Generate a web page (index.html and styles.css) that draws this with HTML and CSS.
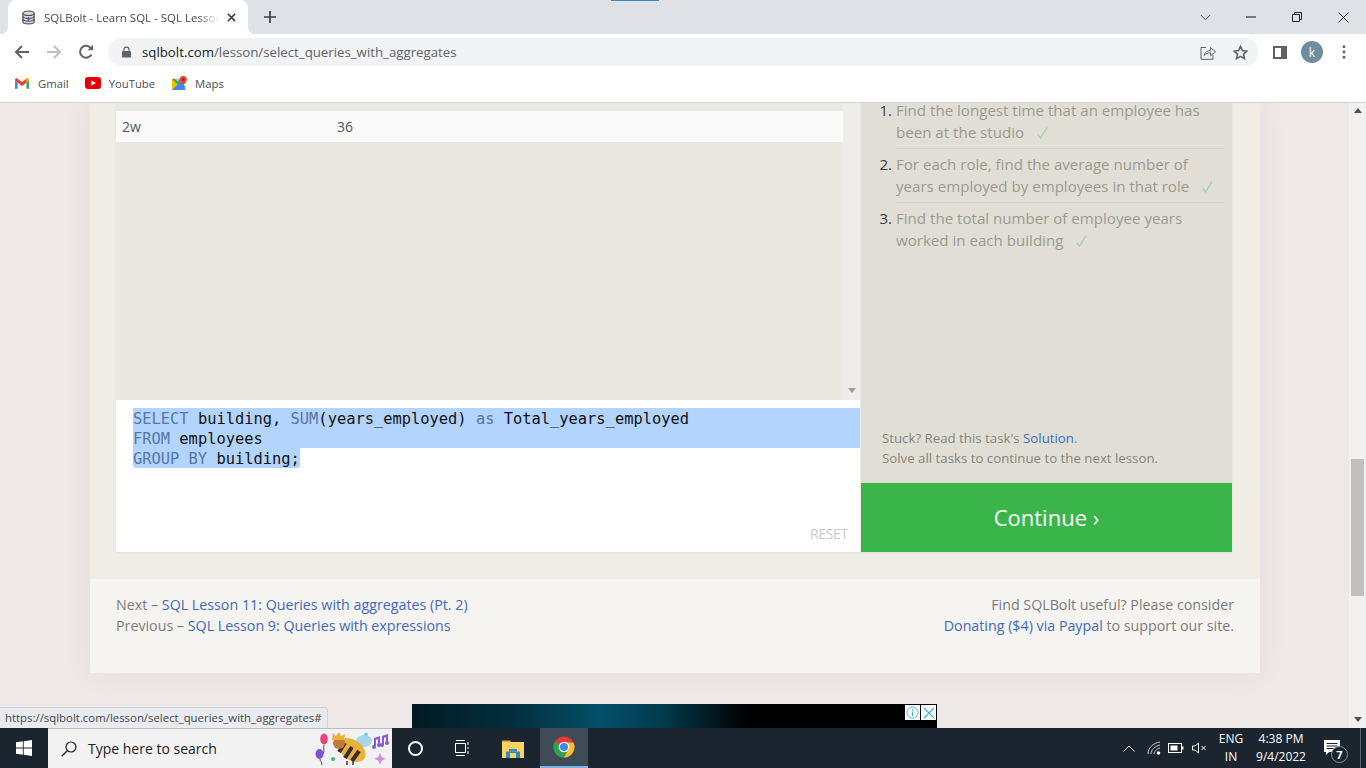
FILE: index.html
```html
<!DOCTYPE html>
<html lang="en">
<head>
<meta charset="utf-8">
<title>SQLBolt - Learn SQL - SQL Lesson 10: Queries with aggregates (Pt. 1)</title>
<link rel="stylesheet" href="styles.css">
</head>
<body>
<header class="browser">
  <div class="tabstrip">
    <i class="sliver"></i>
    <div class="tab">
      <svg class="favicon" viewBox="0 0 16 16" width="15" height="15"><g fill="#d9dadc" stroke="#4b4f54" stroke-width="1.2"><path d="M2 3.5v9c0 1.3 2.7 2.3 6 2.3s6-1 6-2.3v-9"/><ellipse cx="8" cy="3.5" rx="6" ry="2.4"/><path fill="none" d="M2 6.6c0 1.3 2.7 2.3 6 2.3s6-1 6-2.3M2 9.7c0 1.3 2.7 2.3 6 2.3s6-1 6-2.3"/></g><path d="M8 7l1 2 2 .3-2 .8-1 2.2-1-2.2-2-.8 2-.3z" fill="#4a62a8"/></svg>
      <span class="tab-title">SQLBolt - Learn SQL - SQL Lesson 10: Queries</span>
      <svg class="tab-x" viewBox="0 0 10 10" width="9" height="9"><path d="M1 1l8 8M9 1l-8 8" stroke="#3c4043" stroke-width="1.7"/></svg>
    </div>
    <svg class="newtab" viewBox="0 0 12 12" width="12" height="12"><path d="M6 0v12M0 6h12" stroke="#3c4043" stroke-width="1.7"/></svg>
    <div class="winctl">
      <span class="wc"><svg viewBox="0 0 12 8" width="11" height="7"><path d="M.5 1L6 6.5 11.5 1" fill="none" stroke="#333" stroke-width="1"/></svg></span>
      <span class="wc"><svg viewBox="0 0 10 2" width="10" height="2"><path d="M0 1h10" stroke="#222" stroke-width="1.1"/></svg></span>
      <span class="wc"><svg viewBox="0 0 10 10" width="10" height="10"><path d="M.5 2.5h7v7h-7zM2.5 2.5v-2h7v7h-2" fill="none" stroke="#222" stroke-width="1"/></svg></span>
      <span class="wc"><svg viewBox="0 0 11 11" width="11" height="11"><path d="M.5.5l10 10M10.500.5l-10 10" stroke="#222" stroke-width="1"/></svg></span>
    </div>
  </div>
  <div class="toolbar">
    <span class="nav"><svg viewBox="0 0 16 16" width="16" height="16"><path d="M15 8H2M8 2L2 8l6 6" fill="none" stroke="#5f6368" stroke-width="2"/></svg></span>
    <span class="nav"><svg viewBox="0 0 16 16" width="16" height="16"><path d="M1 8h13M8 2l6 6-6 6" fill="none" stroke="#bdc1c6" stroke-width="2"/></svg></span>
    <span class="nav"><svg viewBox="0 0 16 16" width="16" height="16"><path d="M13.4 10.5A6 6 0 1 1 13 4.3" fill="none" stroke="#5f6368" stroke-width="2"/><path d="M9.5 6.2H15V.8z" fill="#5f6368"/></svg></span>
    <div class="omnibox">
      <svg class="lock" viewBox="0 0 10 12" width="9" height="12"><path d="M2.2 5V3.4a2.8 2.8 0 0 1 5.6 0V5" fill="none" stroke="#5f6368" stroke-width="1.3"/><rect y="5" width="10" height="7" rx="1" fill="#5f6368"/></svg>
      <span class="url">sqlbolt.com<span class="url-path">/lesson/select_queries_with_aggregates</span></span>
      <svg class="omni-share" viewBox="0 0 16 15" width="16" height="15"><path d="M6 2.5H1v11.800h12V10" fill="none" stroke="#5f6368" stroke-width="1"/><path d="M4 10.500C5 7 7.500 5.500 10.500 5.500V2.500l5 4.300-5 4v-3C8 7.800 6 8.500 4 10.500z" fill="none" stroke="#5f6368" stroke-width="1"/></svg>
      <svg class="omni-star" viewBox="0 0 16 16" width="15" height="15"><path d="M8 1.500l2 4.500 4.800.5-3.600 3.200 1 4.800L8 12.100 3.800 14.500l1-4.800L1.200 6.500 6 6z" fill="none" stroke="#5f6368" stroke-width="1.700"/></svg>
    </div>
    <svg class="sidepanel" viewBox="0 0 14 13" width="14" height="13"><rect x="1" y="1" width="12" height="11" fill="#fff" stroke="#5f6368" stroke-width="2"/><rect x="8" y="1" width="5" height="11" fill="#5f6368"/></svg>
    <span class="avatar">k</span>
    <svg class="dots" viewBox="0 0 4 16" width="4" height="14"><circle cx="2" cy="2" r="1.600" fill="#5f6368"/><circle cx="2" cy="8" r="1.600" fill="#5f6368"/><circle cx="2" cy="14" r="1.600" fill="#5f6368"/></svg>
  </div>
  <nav class="bookmarks">
    <a class="bm bm-gmail"><svg viewBox="0 0 16 12" width="14" height="11"><path d="M0 2v10h3V5z" fill="#4285f4"/><path d="M16 2v10h-3V5z" fill="#34a853"/><path d="M0 2l3 3 5 3.800L13 5l3-3c0-2-2-2.500-3-1.500L8 4.400 3 .5C2-.5 0 0 0 2z" fill="#ea4335"/><path d="M13 5l3-3c0-2-2-2.500-3-1.500z" fill="#fbbc04"/></svg>Gmail</a>
    <a class="bm bm-yt"><svg viewBox="0 0 16 12" width="16" height="12"><rect width="16" height="12" rx="3" fill="#e60000"/><path d="M6.300 3.400v5.200L11 6z" fill="#fff"/></svg>YouTube</a>
    <a class="bm bm-maps"><svg viewBox="0 0 16 16" width="15" height="15"><path d="M0 3h9v12H0z" fill="#34a853"/><path d="M0 15L9 6l5 5v4z" fill="#4285f4"/><path d="M0 3l6 6-6 6z" fill="#fbbc04"/><path d="M3 3h6l-3 3z" fill="#a6d4a8"/><path d="M12 0a3.800 3.800 0 0 1 3.800 3.800C15.800 6.500 12 10 12 10S8.200 6.500 8.200 3.800A3.800 3.800 0 0 1 12 0z" fill="#ea4335"/><circle cx="12" cy="3.800" r="1.300" fill="#8c1b12"/></svg>Maps</a>
  </nav>
</header>

<div class="viewport">
  <main class="page">
    <article class="card">
      <section class="exercise">
        <div class="panel">
          <div class="workspace">
            <div class="results-wrap">
              <div class="results">
                <div class="row"><span class="cell-a">2w</span><span>36</span></div>
              </div>
              <div class="inner-scroll"><i class="arrow-down small"></i></div>
            </div>
            <div class="editor">
              <div class="code">
                <div class="line"><b>SELECT</b> building, <b>SUM</b>(years_employed) <b>as</b> Total_years_employed</div>
                <div class="line"><b>FROM</b> employees</div>
                <div class="line last"><b>GROUP BY</b> building;</div>
              </div>
              <div class="reset">RESET</div>
            </div>
          </div>
          <aside class="side">
            <ol class="tasks">
              <li>Find the longest time that an employee has been at the studio<svg class="tick" viewBox="0 0 11 12" width="11" height="12"><path d="M.7 7.500L3.500 11 10 .5" fill="none" stroke="#9fcf9f" stroke-width="1.200"/></svg></li>
              <li>For each role, find the average number of years employed by employees in that role<svg class="tick" viewBox="0 0 11 12" width="11" height="12"><path d="M.7 7.500L3.500 11 10 .5" fill="none" stroke="#9fcf9f" stroke-width="1.200"/></svg></li>
              <li>Find the total number of employee years worked in each building<svg class="tick" viewBox="0 0 11 12" width="11" height="12"><path d="M.7 7.500L3.500 11 10 .5" fill="none" stroke="#9fcf9f" stroke-width="1.200"/></svg></li>
            </ol>
            <div class="hint">
              <div>Stuck? Read this task's <a class="link">Solution</a>.</div>
              <div>Solve all tasks to continue to the next lesson.</div>
            </div>
            <a class="continue">Continue ›</a>
          </aside>
        </div>
      </section>
      <footer class="foot">
        <div>
          <div>Next – <a class="link">SQL Lesson 11: Queries with aggregates (Pt. 2)</a></div>
          <div>Previous – <a class="link">SQL Lesson 9: Queries with expressions</a></div>
        </div>
        <div class="foot-right">
          <div>Find SQLBolt useful? Please consider</div>
          <div><a class="link">Donating ($4) via Paypal</a> to support our site.</div>
        </div>
      </footer>
    </article>
    <div class="ad">
      <span class="ad-btn"><svg viewBox="0 0 14 14" width="13" height="13"><circle cx="7" cy="7" r="6" fill="none" stroke="#3bb6d3" stroke-width="1"/><path d="M7 6v5M7 3.200v1.600" stroke="#3bb6d3" stroke-width="1.400"/></svg></span>
      <span class="ad-btn"><svg viewBox="0 0 12 12" width="12" height="12"><path d="M1 1l10 10M11 1L1 11" stroke="#3bb6d3" stroke-width="1.200"/></svg></span>
    </div>
  </main>
  <div class="scrollbar">
    <i class="arrow-up"></i>
    <i class="thumb"></i>
    <i class="arrow-down"></i>
  </div>
  <div class="status">https://sqlbolt.com/lesson/select_queries_with_aggregates#</div>
</div>

<footer class="taskbar">
  <span class="start"><svg viewBox="0 0 16 16" width="16" height="16"><path d="M0 2.300l6.800-1v6.300H0zM7.700 1.200L16 0v7.600H7.700zM0 8.400h6.800v6.300L0 13.700zM7.700 8.400H16V16l-8.300-1.200z" fill="#fff"/></svg></span>
  <div class="search">
    <svg class="search-ico" viewBox="0 0 16 16" width="16" height="16"><circle cx="10" cy="6" r="5" fill="none" stroke="#222" stroke-width="1.200"/><path d="M6.300 9.700L.7 15.300" stroke="#222" stroke-width="1.400"/></svg>
    <span class="search-text">Type here to search</span>
    <svg class="bee" viewBox="0 0 76 34" width="76" height="34">
      <path d="M10 13c-1 4 1 6-1 9M6 27c0 2 2 3 2 6" fill="none" stroke="#5a3b78" stroke-width="1"/>
      <ellipse cx="10" cy="7" rx="3.800" ry="5.500" fill="#e8457c"/>
      <ellipse cx="5.500" cy="22" rx="4" ry="5" fill="#7c55d6"/>
      <ellipse cx="50" cy="9" rx="8" ry="6" fill="#a9d5f0"/>
      <ellipse cx="38" cy="18" rx="15" ry="10" transform="rotate(35 38 18)" fill="#e9b238"/>
      <path d="M31 11l-6 9M38 15l-7 11M45 19l-7 10" stroke="#3a2b2b" stroke-width="4"/>
      <path d="M33 29v4M39 29v4" stroke="#4d3a3a" stroke-width="1.500"/>
      <circle cx="25" cy="11" r="6" fill="#c07a3a"/>
      <path d="M18 8l1-7 3 3 3-4 2 4 4-2-1 6z" fill="#eab13a"/>
      <circle cx="52" cy="2.500" r="2" fill="#6ad6d6"/>
      <circle cx="19" cy="27" r="2" fill="#35c07a"/>
      <path d="M60 6l6-2v9h-2V7l-2 1v7h-2zM68 4l6-2v9h-2V5l-2 1v7h-2z" fill="#8a5bd6"/>
      <circle cx="60" cy="15" r="2" fill="#8a5bd6"/><circle cx="65" cy="13" r="2" fill="#8a5bd6"/><circle cx="68" cy="13" r="2" fill="#8a5bd6"/><circle cx="73" cy="11" r="2" fill="#8a5bd6"/>
      <path d="M66 21l1.700 4 4 1.700-4 1.700-1.700 4-1.700-4-4-1.700 4-1.700z" fill="#d98ae0"/>
    </svg>
  </div>
  <span class="tb cortana"><i class="ring"></i></span>
  <span class="tb taskview"><svg viewBox="0 0 16 16" width="16" height="16"><path d="M.5 3.500h10v9H.5zM1 .5h9M1 15.500h9M13 2v3M13 7v2M13 11v3" fill="none" stroke="#fff" stroke-width="1"/></svg></span>
  <span class="tb explorer"><svg viewBox="0 0 22 19" width="22" height="19"><path d="M0 1.500h8l2 2.500H0z" fill="#e2a92e"/><rect y="3" width="22" height="16" fill="#fbd35f"/><rect x="7" y="10" width="8" height="2.500" fill="#2f89c6"/><rect x="4" y="12.500" width="14" height="6.500" fill="#2f89c6"/><rect x="8" y="14" width="6" height="5" fill="#fbd35f"/></svg></span>
  <span class="tb chrome"><svg viewBox="0 0 24 24" width="22" height="22"><circle cx="12" cy="12" r="11.500" fill="#e53b30"/><path d="M12 12L1.900 6.300A11.500 11.500 0 0 0 12 23.500l5.800-11z" fill="#2ea44f"/><path d="M12 7h10.300A11.500 11.500 0 0 1 12 23.500l5-9z" fill="#fbc02d"/><circle cx="12" cy="12" r="5.700" fill="#fff"/><circle cx="12" cy="12" r="4.400" fill="#3f87e8"/></svg></span>
  <div class="tray">
    <svg class="tr-up" viewBox="0 0 12 7" width="12" height="7"><path d="M.5 6.500L6 1l5.500 5.500" fill="none" stroke="#fff" stroke-width="1"/></svg>
    <svg class="tr-wifi" viewBox="0 0 14 14" width="14" height="14"><path d="M1 13C1 7 6 2 13 1M4 13c0-4 4-8 9-9M7 13c0-2.500 2.500-5 6-6" fill="none" stroke="#c9ccd0" stroke-width="1"/><circle cx="11.500" cy="12" r="1.800" fill="#fff"/></svg>
    <svg class="tr-batt" viewBox="0 0 16 10" width="16" height="10"><rect x=".5" y=".5" width="13" height="9" fill="none" stroke="#fff"/><rect x="2.500" y="2.500" width="7" height="5" fill="#fff"/><rect x="14" y="3.500" width="1.500" height="3" fill="#fff"/></svg>
    <svg class="tr-vol" viewBox="0 0 15 12" width="15" height="12"><path d="M.5 4h2.500L6.500 1v10L3 8H.5z" fill="none" stroke="#fff"/><path d="M9.500 4l4 4M13.500 4l-4 4" stroke="#fff"/></svg>
    <div class="lang"><span>ENG</span><span>IN</span></div>
    <div class="clock"><span>4:38 PM</span><span>9/4/2022</span></div>
    <span class="notif">
      <svg viewBox="0 0 16 16" width="16" height="16"><path d="M0 0h16v12H5l-3 3v-3H0z" fill="#fff"/><path d="M2.500 3.500h11M2.500 6h11M2.500 8.500h7" stroke="#1b2530" stroke-width="1"/></svg>
      <i class="badge">7</i>
    </span>
  </div>
</footer>
</body>
</html>
```

FILE: styles.css
```css
* { box-sizing: border-box; }
html, body { height: 100%; }
body {
  margin: 0;
  width: 1366px;
  height: 768px;
  overflow: hidden;
  display: flex;
  flex-direction: column;
  font-family: "Open Sans", "Noto Sans", sans-serif;
  background: #eee9e6;
}
svg { display: block; flex: none; }
i { font-style: normal; display: block; }

/* ---------- browser chrome ---------- */
.browser { height: 103px; flex: none; border-bottom: 1px solid #d6d6d6; background: #fff; }
.tabstrip { height: 34px; background: #dee1e6; display: flex; align-items: center; padding-left: 8px; position: relative; }
.sliver { position: absolute; left: 611px; top: 0; width: 48px; height: 1px; background: #3d85c6; }
.tab {
  width: 240px; height: 34px; background: #fff; border-radius: 8px 8px 0 0;
  display: flex; align-items: center; padding-left: 13px; position: relative;
}
.tab::before, .tab::after { content: ""; position: absolute; bottom: 0; width: 8px; height: 8px; }
.tab::before { left: -8px; background: radial-gradient(circle at 0 0, transparent 8px, #fff 8.5px); }
.tab::after { right: -8px; background: radial-gradient(circle at 100% 0, transparent 8px, #fff 8.5px); }
.tab-title {
  margin-left: 8px; width: 175px; white-space: nowrap; overflow: hidden;
  font-size: 11.5px; color: #45484c;
  -webkit-mask-image: linear-gradient(90deg, #000 88%, transparent 100%);
  mask-image: linear-gradient(90deg, #000 88%, transparent 100%);
}
.tab-x { margin-left: 8px; }
.newtab { margin-left: 16px; }
.winctl { margin-left: auto; display: flex; }
.wc { width: 46px; height: 30px; display: flex; align-items: center; justify-content: center; }

.toolbar { height: 34px; display: flex; align-items: center; padding: 2px 0 0 6px; }
.nav { width: 32px; display: flex; justify-content: center; }
.omnibox {
  margin-left: 6px; width: 1150px; height: 28px; border-radius: 14px; background: #f1f3f4;
  display: flex; align-items: center; padding-left: 14px;
}
.url { margin-left: 11px; font-size: 13.25px; color: #202124; }
.url-path { color: #5f6368; }
.omni-share { margin-left: auto; }
.omni-star { margin: 0 10px 0 17px; }
.sidepanel { margin-left: 15px; }
.avatar {
  width: 22px; height: 22px; margin-left: 14px; border-radius: 50%; background: #6e8ea0;
  color: #fff; font-size: 12px; display: flex; align-items: center; justify-content: center;
}
.dots { margin-left: 19px; }

.bookmarks { height: 33px; display: flex; align-items: center; padding: 0 0 3px 15px; font-size: 11.3px; color: #4b4e52; }
.bm { display: flex; align-items: center; }
.bm-gmail svg { margin-right: 9px; }
.bm-yt { margin-left: 16px; }
.bm-yt svg { margin-right: 8px; }
.bm-maps { margin-left: 17px; }
.bm-maps svg { margin-right: 8px; }

/* ---------- page ---------- */
.viewport { flex: 1; min-height: 0; display: flex; position: relative; overflow: hidden; }
.page { width: 1349px; flex: none; overflow: hidden; }
.card {
  width: 1170px; margin-left: 90px; height: 570px;
  box-shadow: 0 0 30px rgba(0, 0, 0, .05);
  display: flex; flex-direction: column;
}
.exercise { height: 476px; flex: none; background: #f0ede5; padding: 0 28px 27px 26px; }
.panel { height: 449px; display: flex; box-shadow: 0 1px 2px rgba(0, 0, 0, .08); }
.workspace { width: 744px; flex: none; display: flex; flex-direction: column; }
.results-wrap { height: 297px; flex: none; display: flex; background: #e9e8e1; }
.results { flex: 1; padding-top: 8px; }
.row { height: 31px; background: #fafafa; display: flex; align-items: center; padding-left: 6px; font-size: 14px; color: #555; }
.cell-a { width: 215px; }
.inner-scroll { width: 17px; background: #ededea; display: flex; flex-direction: column; justify-content: flex-end; align-items: center; padding-bottom: 7px; }
.editor { flex: 1; background: #fff; display: flex; flex-direction: column; padding-top: 8px; padding-left: 17px; }
.code { font-family: "DejaVu Sans Mono", "Liberation Mono", monospace; font-size: 15.4px; color: #111; }
.line { background: #b3d4fd; height: 20px; line-height: 22px; white-space: pre; }
.line.last { width: fit-content; border-radius: 0 0 3px 3px; }
.line b { font-weight: 400; color: #5577aa; }
.reset { margin-top: auto; margin-bottom: 9px; margin-right: 12px; text-align: right; font-size: 14px; letter-spacing: -.3px; color: #c9c9c9; }

.side { flex: 1; margin-left: 1px; background: #e1dfd5; display: flex; flex-direction: column; }
.tasks { margin: -8px 0 0; padding: 0 8px 0 35px; font-size: 15.1px; line-height: 22px; color: #9a9a92; }
.tasks li { padding: 4px 0 5px; border-bottom: 1px solid #d3d2c8; }
.tasks li:last-child { border-bottom: 0; }
.tasks li::marker { color: #3a3a38; }
.tick { display: inline-block; margin-left: 13px; vertical-align: -1px; }
.hint { margin-top: auto; padding: 0 0 15px 21px; font-size: 13.25px; line-height: 20px; color: #85847c; }
.link { color: #3f6abf; text-decoration: none; }
.continue { height: 69px; flex: none; padding-bottom: 2px; background: #3ab54a; color: #fff; font-size: 22px; display: flex; align-items: center; justify-content: center; }

.foot { flex: 1; background: #f6f4f0; padding: 15px 26px 0; display: flex; justify-content: space-between; font-size: 14.25px; line-height: 21px; color: #7c7c7c; }
.foot-right { text-align: right; }

.ad {
  width: 525px; height: 24px; margin: 31px auto 0;
  background: linear-gradient(90deg, #021a22 0%, #03303f 20%, #045068 36%, #033a4c 48%, #000 64%, #000 100%);
  display: flex; justify-content: flex-end; gap: 1px; padding: 1px 1px 0 0;
}
.ad-btn { width: 15px; height: 15px; background: #fff; display: flex; align-items: center; justify-content: center; }

.scrollbar { flex: 1; background: #f1f1f1; display: flex; flex-direction: column; align-items: center; padding: 5px 0 6px; }
.thumb { width: 13px; height: 137px; margin-top: 346px; background: #c0c0c0; }
.arrow-up { width: 0; height: 0; border: 4px solid transparent; border-top: 0; border-bottom: 5px solid #505050; }
.arrow-down { width: 0; height: 0; margin-top: auto; border: 4px solid transparent; border-bottom: 0; border-top: 5px solid #505050; }
.arrow-down.small { margin-top: 0; border-top-color: #9d9d9d; }

.status {
  position: absolute; left: 0; bottom: 0; width: 328px; height: 21px;
  background: #e9ebee; border: 1px solid #cfd2d6; border-left: 0; border-bottom: 0; border-radius: 0 4px 0 0;
  font-size: 11.4px; line-height: 20px; padding-left: 5px; color: #45484c; white-space: nowrap;
}

/* ---------- taskbar ---------- */
.taskbar { height: 40px; flex: none; background: #1a2530; display: flex; align-items: center; color: #fff; }
.start { width: 48px; display: flex; justify-content: center; }
.search { width: 344px; height: 40px; background: #f2f2f2; border-top: 1px solid #b8bcc0; display: flex; align-items: center; padding-left: 13px; }
.search-text { margin-left: 11px; font-size: 14px; color: #222; }
.bee { margin-left: auto; margin-right: 2px; }
.tb { height: 40px; display: flex; align-items: center; justify-content: center; flex: none; }
.cortana { width: 47px; }
.ring { width: 15px; height: 15px; border: 2.5px solid #fff; border-radius: 50%; }
.taskview { width: 47px; }
.explorer { width: 54px; }
.chrome { width: 48px; background: #3f4b56; border-bottom: 2px solid #7db4e6; }
.tray { margin-left: auto; margin-right: 5px; display: flex; align-items: center; height: 40px; width: 243px; border-right: 1px solid #5a6570; padding-left: 5px; }
.tr-wifi { margin-left: 12px; }
.tr-batt { margin-left: 7px; }
.tr-vol { margin-left: 8px; }
.lang { width: 32px; margin-left: 8px; display: flex; flex-direction: column; align-items: center; font-size: 12px; line-height: 18px; }
.clock { width: 58px; margin-left: 5px; display: flex; flex-direction: column; align-items: center; font-size: 12px; line-height: 18px; white-space: nowrap; }
.notif { margin-left: 14px; position: relative; }
.badge {
  position: absolute; right: -8px; bottom: -7px; width: 17px; height: 17px; border-radius: 50%;
  background: #1a2530; border: 1px solid #8a9096; font-size: 11px; font-weight: 700; line-height: 15px; text-align: center;
}
```
